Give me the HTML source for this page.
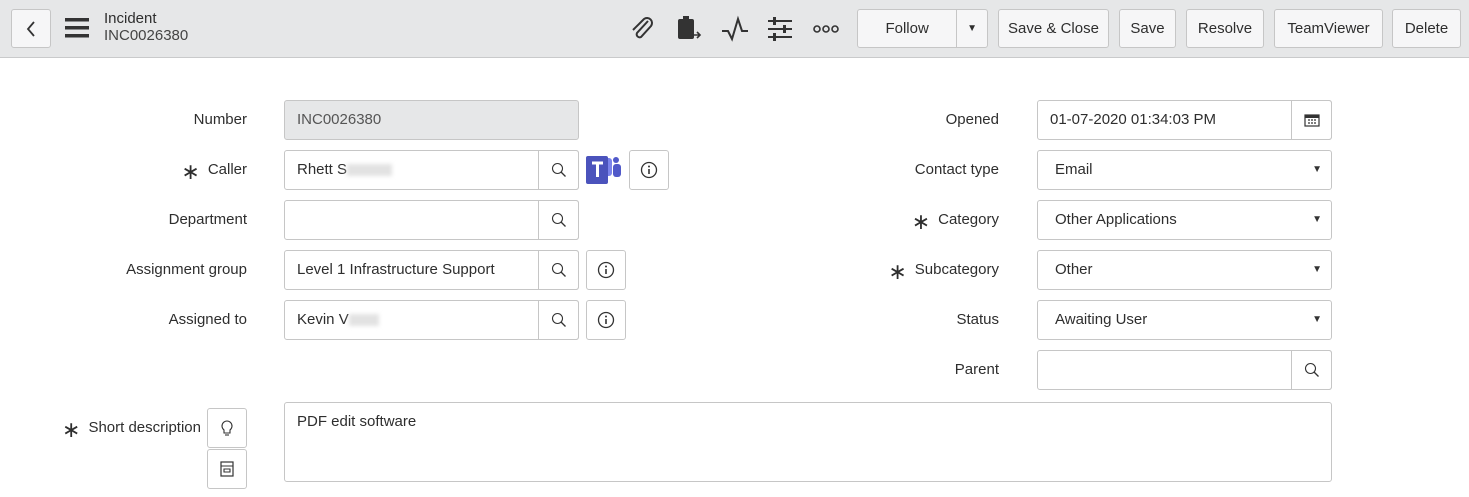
<!DOCTYPE html>
<html><head><meta charset="utf-8"><style>
*{box-sizing:border-box;margin:0;padding:0}
body{width:1469px;height:497px;background:#fff;font-family:"Liberation Sans",sans-serif;font-size:15px;color:#2e2e2e;position:relative;overflow:hidden}
.hdr{position:absolute;left:0;top:0;width:1469px;height:58px;background:#e6e7e8;border-bottom:1px solid #c9cacb}
.a{position:absolute}
.btn{position:absolute;top:9px;height:39px;border:1px solid #c6c6c6;border-radius:3px;background:#f6f6f7;font-size:15px;display:flex;align-items:center;justify-content:center;color:#2e2e2e}
.lbl{position:absolute;text-align:right;width:300px;font-size:15px;color:#2e2e2e;line-height:40px;height:40px}
.inp{position:absolute;height:40px;border:1px solid #c6c6c6;border-radius:3px;background:#fff;padding-left:12px;line-height:38px;font-size:15px}
.sb{position:absolute;top:-1px;right:-1px;width:41px;height:40px;border:1px solid #c6c6c6;border-radius:0 3px 3px 0;display:flex;align-items:center;justify-content:center}
.ib{position:absolute;width:40px;height:40px;border:1px solid #c6c6c6;border-radius:3px;display:flex;align-items:center;justify-content:center;background:#fff}
.car{position:absolute;right:9px;top:0;line-height:38px;font-size:10px;color:#333}
.star{font-size:22px;vertical-align:middle;margin-right:8px;position:relative;top:2px}
</style></head><body>
<div class="hdr"></div>
<div class="btn" style="left:11px;width:40px"><svg width="12" height="18"><path d="M9 2 L3 9 L9 16" stroke="#333" stroke-width="1.8" fill="none"/></svg></div>
<svg class="a" style="left:65px;top:18px" width="24" height="20"><rect y="0" width="24" height="3.5" fill="#333"/><rect y="8" width="24" height="3.5" fill="#333"/><rect y="16" width="24" height="3.5" fill="#333"/></svg>
<div class="a" style="left:104px;top:10px;font-size:15px;color:#2e2e2e">Incident</div>
<div class="a" style="left:104px;top:27px;font-size:15px;color:#444">INC0026380</div>
<svg class="a" style="left:628px;top:15px" width="28" height="28"><path d="M20 6 L9 18 a3 3 0 0 0 4 4 L23 11 a5 5 0 0 0 -7-7 L5 15" stroke="#333" stroke-width="2" fill="none"/></svg>
<svg class="a" style="left:676px;top:15px" width="26" height="28"><rect x="2" y="4" width="16" height="20" rx="2" fill="#333"/><rect x="7" y="1" width="6" height="6" fill="#333"/><path d="M16 20 h8 M21 17 l3 3 -3 3" stroke="#333" stroke-width="1.6" fill="#fff"/></svg>
<svg class="a" style="left:720px;top:15px" width="30" height="28"><path d="M2 16 h6 l4 8 l6 -20 l4 12 h6" stroke="#333" stroke-width="2" fill="none"/></svg>
<svg class="a" style="left:767px;top:15px" width="26" height="28"><path d="M1 6h24M1 14h24M1 22h24" stroke="#333" stroke-width="2"/><rect x="6" y="2" width="3" height="8" fill="#333"/><rect x="16" y="10" width="3" height="8" fill="#333"/><rect x="6" y="18" width="3" height="8" fill="#333"/></svg>
<svg class="a" style="left:813px;top:23px" width="28" height="12"><circle cx="4" cy="6" r="3" stroke="#333" stroke-width="1.6" fill="none"/><circle cx="13" cy="6" r="3" stroke="#333" stroke-width="1.6" fill="none"/><circle cx="22" cy="6" r="3" stroke="#333" stroke-width="1.6" fill="none"/></svg>
<div class="btn" style="left:857px;width:131px;justify-content:flex-start"><span style="width:99px;text-align:center">Follow</span><span style="border-left:1px solid #c6c6c6;height:37px;width:31px;display:flex;align-items:center;justify-content:center;font-size:10px">▼</span></div>
<div class="btn" style="left:998px;width:111px">Save &amp; Close</div>
<div class="btn" style="left:1119px;width:57px">Save</div>
<div class="btn" style="left:1186px;width:78px">Resolve</div>
<div class="btn" style="left:1274px;width:109px">TeamViewer</div>
<div class="btn" style="left:1392px;width:69px">Delete</div>

<div class="lbl" style="left:-53px;top:100px">Number</div>
<div class="inp" style="left:284px;top:100px;width:295px;background:#e6e7e8;color:#555">INC0026380</div>

<div class="lbl" style="left:-53px;top:150px"><span class="star">∗</span>Caller</div>
<div class="inp" style="left:284px;top:150px;width:295px">Rhett S<span style="display:inline-block;width:45px;height:12px;background:#e2e2e2;vertical-align:middle;filter:blur(2px)"></span><div class="sb"><svg width="16" height="16"><circle cx="6.5" cy="6.5" r="5" stroke="#333" stroke-width="1.1" fill="none"/><path d="M10 10 L14.5 14.5" stroke="#333" stroke-width="1.3"/></svg></div></div>
<svg class="a" style="left:586px;top:153px" width="38" height="34"><rect x="17" y="5" width="9" height="18" rx="3" fill="#7b83eb"/><circle cx="30" cy="7" r="3" fill="#5059c9"/><rect x="27" y="11" width="8" height="13" rx="3" fill="#5059c9"/><rect x="0" y="3" width="22" height="28" rx="2" fill="#4b53bc"/><path d="M6 10 h11 M11.5 10 v14" stroke="#fff" stroke-width="3"/></svg>
<div class="ib" style="left:629px;top:150px"><svg width="18" height="18"><circle cx="9" cy="9" r="7.5" stroke="#333" stroke-width="1.3" fill="none"/><path d="M9 8v5" stroke="#333" stroke-width="1.6"/><circle cx="9" cy="5.5" r="1" fill="#333"/></svg></div>

<div class="lbl" style="left:-53px;top:200px">Department</div>
<div class="inp" style="left:284px;top:200px;width:295px"><div class="sb"><svg width="16" height="16"><circle cx="6.5" cy="6.5" r="5" stroke="#333" stroke-width="1.1" fill="none"/><path d="M10 10 L14.5 14.5" stroke="#333" stroke-width="1.3"/></svg></div></div>

<div class="lbl" style="left:-53px;top:250px">Assignment group</div>
<div class="inp" style="left:284px;top:250px;width:295px">Level 1 Infrastructure Support<div class="sb"><svg width="16" height="16"><circle cx="6.5" cy="6.5" r="5" stroke="#333" stroke-width="1.1" fill="none"/><path d="M10 10 L14.5 14.5" stroke="#333" stroke-width="1.3"/></svg></div></div>
<div class="ib" style="left:586px;top:250px"><svg width="18" height="18"><circle cx="9" cy="9" r="7.5" stroke="#333" stroke-width="1.3" fill="none"/><path d="M9 8v5" stroke="#333" stroke-width="1.6"/><circle cx="9" cy="5.5" r="1" fill="#333"/></svg></div>

<div class="lbl" style="left:-53px;top:300px">Assigned to</div>
<div class="inp" style="left:284px;top:300px;width:295px">Kevin V<span style="display:inline-block;width:30px;height:12px;background:#e2e2e2;vertical-align:middle;filter:blur(2px)"></span><div class="sb"><svg width="16" height="16"><circle cx="6.5" cy="6.5" r="5" stroke="#333" stroke-width="1.1" fill="none"/><path d="M10 10 L14.5 14.5" stroke="#333" stroke-width="1.3"/></svg></div></div>
<div class="ib" style="left:586px;top:300px"><svg width="18" height="18"><circle cx="9" cy="9" r="7.5" stroke="#333" stroke-width="1.3" fill="none"/><path d="M9 8v5" stroke="#333" stroke-width="1.6"/><circle cx="9" cy="5.5" r="1" fill="#333"/></svg></div>

<div class="lbl" style="left:699px;top:100px">Opened</div>
<div class="inp" style="left:1037px;top:100px;width:295px">01-07-2020 01:34:03 PM<div class="sb"><svg width="16" height="14"><rect x="1" y="2" width="14" height="11" stroke="#333" stroke-width="1.2" fill="none"/><rect x="1" y="2" width="14" height="3" fill="#333"/><path d="M4 7h2M7 7h2M10 7h2M4 10h2M7 10h2M10 10h2" stroke="#333" stroke-width="1.3"/></svg></div></div>
<div class="lbl" style="left:699px;top:150px">Contact type</div>
<div class="inp" style="left:1037px;top:150px;width:295px;padding-left:17px">Email<span class="car">▼</span></div>
<div class="lbl" style="left:699px;top:200px"><span class="star">∗</span>Category</div>
<div class="inp" style="left:1037px;top:200px;width:295px;padding-left:17px">Other Applications<span class="car">▼</span></div>
<div class="lbl" style="left:699px;top:250px"><span class="star">∗</span>Subcategory</div>
<div class="inp" style="left:1037px;top:250px;width:295px;padding-left:17px">Other<span class="car">▼</span></div>
<div class="lbl" style="left:699px;top:300px">Status</div>
<div class="inp" style="left:1037px;top:300px;width:295px;padding-left:17px">Awaiting User<span class="car">▼</span></div>
<div class="lbl" style="left:699px;top:350px">Parent</div>
<div class="inp" style="left:1037px;top:350px;width:295px"><div class="sb"><svg width="16" height="16"><circle cx="6.5" cy="6.5" r="5" stroke="#333" stroke-width="1.1" fill="none"/><path d="M10 10 L14.5 14.5" stroke="#333" stroke-width="1.3"/></svg></div></div>

<div class="a" style="left:62px;top:408px;line-height:40px;height:40px;font-size:15px"><span class="star">∗</span>Short description</div>
<div class="ib" style="left:207px;top:408px"><svg width="14" height="18"><path d="M4 11 a5 5 0 1 1 6 0 v3 h-6z" stroke="#333" stroke-width="1.1" fill="none"/><path d="M5 16h4" stroke="#333" stroke-width="1.1"/></svg></div>
<div class="ib" style="left:207px;top:449px"><svg width="14" height="16"><rect x="1" y="1" width="12" height="14" stroke="#333" stroke-width="1.2" fill="none"/><path d="M1 5h12M4 8h6v3h-6z" stroke="#333" stroke-width="1.1" fill="none"/></svg></div>
<div class="a" style="left:284px;top:402px;width:1048px;height:80px;border:1px solid #c6c6c6;border-radius:3px;padding:10px 12px;font-size:15px">PDF edit software</div>
</body></html>
